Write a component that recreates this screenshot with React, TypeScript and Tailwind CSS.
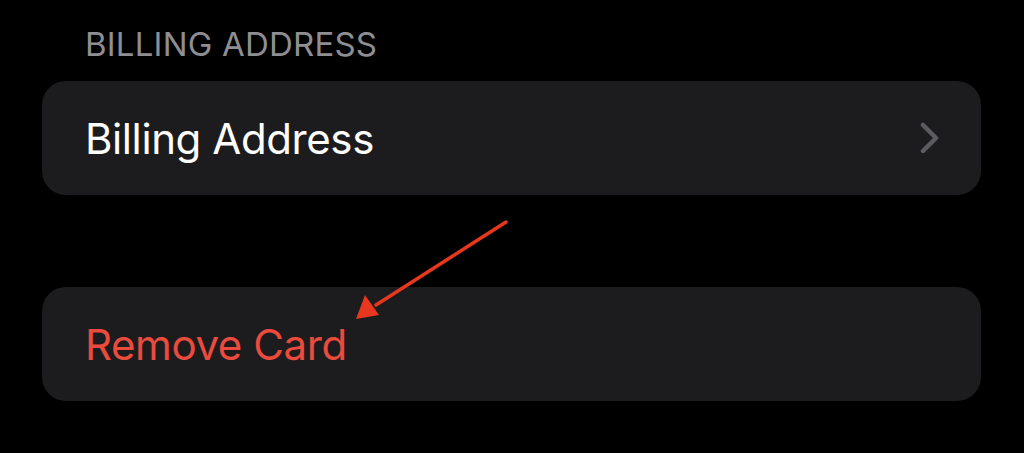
import React from "react";

export default function App() {
  return (
    <div
      className="relative w-[1024px] h-[453px] bg-black overflow-hidden"
      style={{ fontFamily: "Inter, 'Noto Sans', sans-serif" }}
    >
      <div className="pl-[42px] pr-[43px] pt-[22px] flex flex-col">
        <div className="pl-[43px] text-[33px] leading-[44px] text-[#8e8e93] tracking-[0.2px]">
          BILLING ADDRESS
        </div>
        <div className="mt-[15px] h-[114px] rounded-[24px] bg-[#1c1c1e] flex items-center justify-between pl-[43px] pr-[40px]">
          <span className="text-[42px] text-white tracking-[-0.4px]">Billing Address</span>
          <svg width="22" height="32" viewBox="0 0 22 32" fill="none">
            <path d="M4 3 L17 16 L4 29" stroke="#5b5b60" strokeWidth="4.5" strokeLinecap="round" strokeLinejoin="round" />
          </svg>
        </div>
        <div className="mt-[92px] h-[114px] rounded-[24px] bg-[#1c1c1e] flex items-center pl-[43px]">
          <span className="text-[42px] text-[#eb4b3d] tracking-[-0.4px]">Remove Card</span>
        </div>
      </div>
      <svg className="absolute left-0 top-0" width="1024" height="453" viewBox="0 0 1024 453">
        <line x1="506" y1="222" x2="376" y2="305" stroke="#e8371f" strokeWidth="3.5" strokeLinecap="round" />
        <polygon points="356,319 365,295 379,315" fill="#e8371f" />
      </svg>
    </div>
  );
}
